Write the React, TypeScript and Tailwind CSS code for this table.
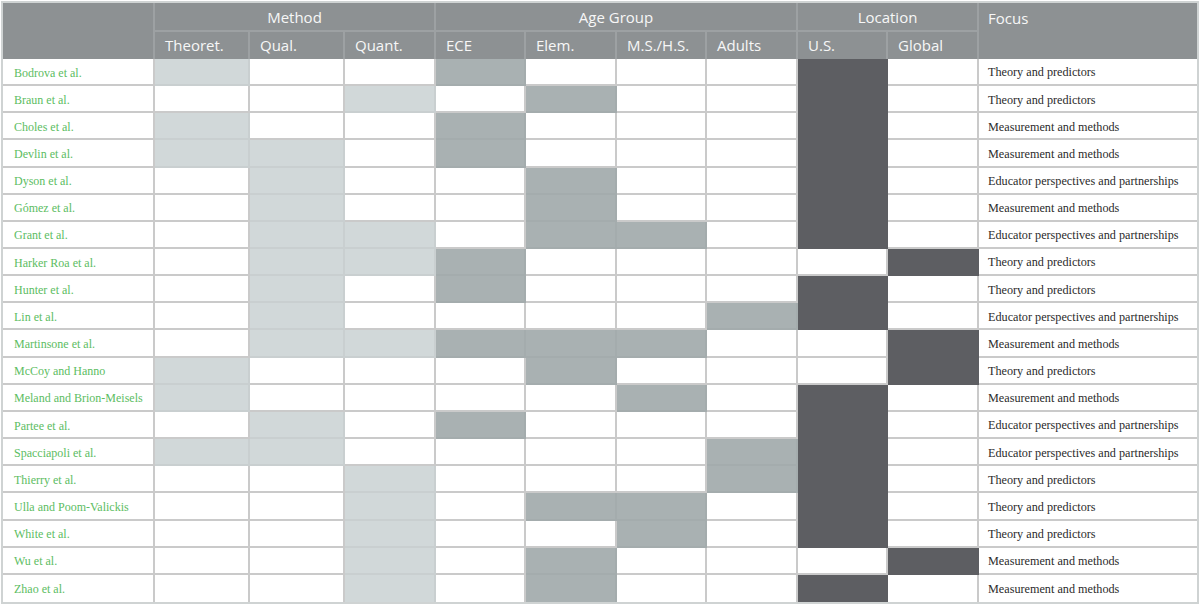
import React from "react";

type Row = { name: string; cells: number[]; focus: string };
// cells index: 0 T,1 Ql,2 Qn,3 ECE,4 El,5 MS,6 Ad,7 US,8 Gl
const rows: Row[] = [
  { name: "Bodrova et al.", cells: [0, 3, 7], focus: "Theory and predictors" },
  { name: "Braun et al.", cells: [2, 4, 7], focus: "Theory and predictors" },
  { name: "Choles et al.", cells: [0, 3, 7], focus: "Measurement and methods" },
  { name: "Devlin et al.", cells: [0, 1, 3, 7], focus: "Measurement and methods" },
  { name: "Dyson et al.", cells: [1, 4, 7], focus: "Educator perspectives and partnerships" },
  { name: "Gómez et al.", cells: [1, 4, 7], focus: "Measurement and methods" },
  { name: "Grant et al.", cells: [1, 2, 4, 5, 7], focus: "Educator perspectives and partnerships" },
  { name: "Harker Roa et al.", cells: [1, 2, 3, 8], focus: "Theory and predictors" },
  { name: "Hunter et al.", cells: [1, 3, 7], focus: "Theory and predictors" },
  { name: "Lin et al.", cells: [1, 6, 7], focus: "Educator perspectives and partnerships" },
  { name: "Martinsone et al.", cells: [1, 2, 3, 4, 5, 8], focus: "Measurement and methods" },
  { name: "McCoy and Hanno", cells: [0, 4, 8], focus: "Theory and predictors" },
  { name: "Meland and Brion-Meisels", cells: [0, 5, 7], focus: "Measurement and methods" },
  { name: "Partee et al.", cells: [1, 3, 7], focus: "Educator perspectives and partnerships" },
  { name: "Spacciapoli et al.", cells: [0, 1, 6, 7], focus: "Educator perspectives and partnerships" },
  { name: "Thierry et al.", cells: [2, 6, 7], focus: "Theory and predictors" },
  { name: "Ulla and Poom-Valickis", cells: [2, 4, 5, 7], focus: "Theory and predictors" },
  { name: "White et al.", cells: [2, 5, 7], focus: "Theory and predictors" },
  { name: "Wu et al.", cells: [2, 4, 8], focus: "Measurement and methods" },
  { name: "Zhao et al.", cells: [2, 4, 7], focus: "Measurement and methods" },
];

function fillClass(col: number, on: boolean, last: boolean): string {
  if (!on) {
    return last
      ? "bg-white border-r-2 border-[#cacaca]"
      : "bg-white border-r-2 border-b-2 border-[#cacaca]";
  }
  if (col <= 2) {
    return last
      ? "bg-[#d1d8d9] border-r-2 border-[#c9cfd0]"
      : "bg-[#d1d8d9] border-r-2 border-b-2 border-[#c9cfd0]";
  }
  if (col <= 6) {
    return last
      ? "bg-[#a9b1b2] border-r-2 border-[#a4acad]"
      : "bg-[#a9b1b2] border-r-2 border-b-2 border-[#a4acad]";
  }
  return last
    ? "bg-[#5d5e62] border-r-2 border-[#5d5e62]"
    : "bg-[#5d5e62] border-r-2 border-b-2 border-[#5d5e62]";
}

const groups = [
  { label: "Method", cls: "col-span-3" },
  { label: "Age Group", cls: "col-span-4" },
  { label: "Location", cls: "col-span-2" },
];

export default function App() {
  const subs = ["Theoret.", "Qual.", "Quant.", "ECE", "Elem.", "M.S./H.S.", "Adults", "U.S.", "Global"];
  return (
    <div className="w-[1200px] h-[605px] bg-white pt-[1px] pl-[1px]">
      <div className="w-[1198px] h-[603px] border-2 border-[#cfd3d3]">
        <div className="grid w-[1194px] h-[599px] grid-cols-[152px_95px_95px_91px_90px_91px_90px_91px_90px_91px_218px] grid-rows-[29px_27px_repeat(20,minmax(0,1fr))]">
          {/* header */}
          <div className="row-span-2 bg-[#8d9193] border-r-2 border-[#9da1a3]" />
          {groups.map((g) => (
            <div
              key={g.label}
              className={`${g.cls} bg-[#8d9193] border-r-2 border-b-2 border-[#9da1a3] flex items-center justify-center pt-[1px] text-[15px] text-[#f7f7f7] font-['Open_Sans','Liberation_Sans',sans-serif]`}
            >
              {g.label}
            </div>
          ))}
          <div className="row-span-2 bg-[#8d9193] pl-[9px] pt-[5px] text-[15px] leading-[20px] text-[#f7f7f7] font-['Open_Sans','Liberation_Sans',sans-serif]">
            Focus
          </div>
          {subs.map((s) => (
            <div
              key={s}
              className="bg-[#8d9193] border-r-2 border-[#9da1a3] flex items-center pl-[10px] text-[15px] text-[#f7f7f7] font-['Open_Sans','Liberation_Sans',sans-serif]"
            >
              {s}
            </div>
          ))}
          {/* body */}
          {rows.map((r, i) => {
            const last = i === rows.length - 1;
            return (
              <React.Fragment key={r.name}>
                <div
                  className={
                    last
                      ? "bg-white border-r-2 border-[#cacaca] flex items-center pl-[11px] pt-[2px] text-[12px] text-[#5cbd62] font-['Liberation_Serif','DejaVu_Serif',serif]"
                      : "bg-white border-r-2 border-b-2 border-[#cacaca] flex items-center pl-[11px] pt-[2px] text-[12px] text-[#5cbd62] font-['Liberation_Serif','DejaVu_Serif',serif]"
                  }
                >
                  {r.name}
                </div>
                {Array.from({ length: 9 }).map((_, c) => (
                  <div key={c} className={fillClass(c, r.cells.includes(c), last)} />
                ))}
                <div
                  className={
                    last
                      ? "bg-white flex items-center pl-[9px] pt-[2px] text-[12.2px] text-[#2b2b2b] font-['Liberation_Serif','DejaVu_Serif',serif]"
                      : "bg-white border-b-2 border-[#cacaca] flex items-center pl-[9px] pt-[2px] text-[12.2px] text-[#2b2b2b] font-['Liberation_Serif','DejaVu_Serif',serif]"
                  }
                >
                  {r.focus}
                </div>
              </React.Fragment>
            );
          })}
        </div>
      </div>
    </div>
  );
}
